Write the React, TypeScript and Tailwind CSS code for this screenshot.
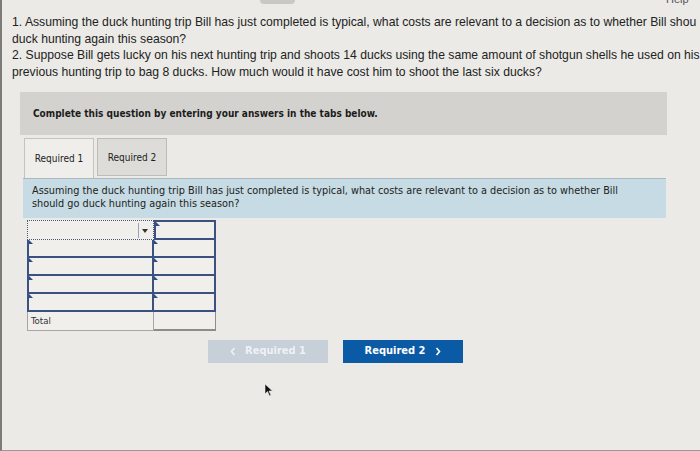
import React from "react";

const rows = [0, 1, 2, 3];

function Marker() {
  return (
    <span className="absolute left-0 top-0 h-0 w-0 border-l-[4px] border-t-[4px] border-l-[#2b4c86] border-t-transparent" />
  );
}

function Chevron({ left }: { left?: boolean }) {
  return (
    <svg width="6" height="9" viewBox="0 0 6 9" fill="none" stroke="currentColor" strokeWidth="1.6">
      <path d={left ? "M4.5 1 L1.5 4.5 L4.5 8" : "M1.5 1 L4.5 4.5 L1.5 8"} />
    </svg>
  );
}

export default function App() {
  return (
    <div className="relative h-[451px] w-[700px] overflow-hidden bg-[#ebeae6] border-l-2 border-b border-l-[#7d7c79] border-b-[#9a9996] font-['Liberation_Sans',sans-serif]">
      {/* top chrome bits */}
      <div className="absolute left-[258px] top-[-6px] h-[10px] w-[35px] rounded bg-[#c9c8c5]" />
      <div className="absolute left-[664px] top-[-9px] text-[11px] text-[#555]">Help</div>

      <div className="pl-[10px] pt-[14px] text-[12.2px] leading-[16.5px] text-[#222] whitespace-nowrap">
        <p>1. Assuming the duck hunting trip Bill has just completed is typical, what costs are relevant to a decision as to whether Bill shou</p>
        <p>duck hunting again this season?</p>
        <p>2. Suppose Bill gets lucky on his next hunting trip and shoots 14 ducks using the same amount of shotgun shells he used on his</p>
        <p>previous hunting trip to bag 8 ducks. How much would it have cost him to shoot the last six ducks?</p>
      </div>

      <div className="ml-[18px] mt-[12px] w-[647px] font-['DejaVu_Sans_Condensed','DejaVu_Sans',sans-serif]">
        <div className="flex h-[43px] items-center bg-[#d3d2cf] pl-[13px] text-[10px] font-bold text-[#1c1c1c]">
          Complete this question by entering your answers in the tabs below.
        </div>

        <div className="mt-[3px] flex gap-[3px] pl-[4px]">
          <div className="flex h-[40px] w-[70px] items-center justify-center border border-b-0 border-[#c4c3bf] bg-[#efeeeb] text-[10px] text-[#222]">
            Required 1
          </div>
          <div className="flex h-[38px] w-[70px] items-center justify-center border border-[#bdbcb8] bg-[#dddcd9] text-[10px] text-[#222]">
            Required 2
          </div>
        </div>

        <div className="ml-[3px] w-[643px] border-t border-[#a9b9c0] bg-[#c6dbe3] px-[9px] pt-[5px] pb-[8px] text-[10.8px] leading-[13px] text-[#222]">
          Assuming the duck hunting trip Bill has just completed is typical, what costs are relevant to a decision as to whether Bill
          <br />
          should go duck hunting again this season?
        </div>

        <div className="ml-[7px] mt-[2px] w-[190px]">
          <div className="flex h-[20px]">
            <div className="relative flex w-[127px] justify-end border border-dotted border-[#4a5a78] bg-[#f0efec] pr-[2px] pt-[2px]">
              <div className="flex h-[15px] w-[13px] items-center justify-center border-l border-[#9aa3b5]">
                <span className="h-0 w-0 border-x-[3px] border-t-[4px] border-x-transparent border-t-[#333]" />
              </div>
            </div>
            <div className="relative w-[62px] border-2 border-[#3b5281] bg-[#f0efec]">
              <Marker />
            </div>
          </div>
          {rows.map((r) => (
            <div key={r} className="flex h-[18px]">
              <div className="relative w-[127px] border-2 border-t-0 border-[#3b5281] bg-[#f0efec]">
                <Marker />
              </div>
              <div className="relative w-[62px] border-2 border-t-0 border-l-0 border-[#3b5281] bg-[#f0efec]">
                <Marker />
              </div>
            </div>
          ))}
          <div className="flex h-[19px]">
            <div className="flex w-[127px] items-center border border-t-0 border-[#a7a6a2] bg-[#f0efec] pl-[3px] text-[9.5px] text-[#333]">
              Total
            </div>
            <div className="w-[62px] border border-t-0 border-l-0 border-[#8d8c88] bg-[#f0efec] border-b-2" />
          </div>
        </div>

        <div className="mt-[9px] flex gap-[15px] pl-[188px]">
          <div className="flex h-[23px] w-[120px] items-center justify-center gap-[9px] bg-[#c7cfd8] text-[11px] font-bold text-[#eef2f6]">
            <Chevron left />
            <span>Required 1</span>
          </div>
          <div className="flex h-[23px] w-[120px] items-center justify-center gap-[10px] bg-[#0b5aa6] text-[11px] font-bold text-white">
            <span>Required 2</span>
            <Chevron />
          </div>
        </div>
      </div>

      {/* mouse cursor */}
      <svg className="absolute left-[262px] top-[383px]" width="9" height="14" viewBox="0 0 9 14">
        <path d="M1 1 L1 11 L3.5 8.5 L5.5 13 L7 12.3 L5 8 L8.5 8 Z" fill="#111" stroke="#eee" strokeWidth="0.6" />
      </svg>
    </div>
  );
}
